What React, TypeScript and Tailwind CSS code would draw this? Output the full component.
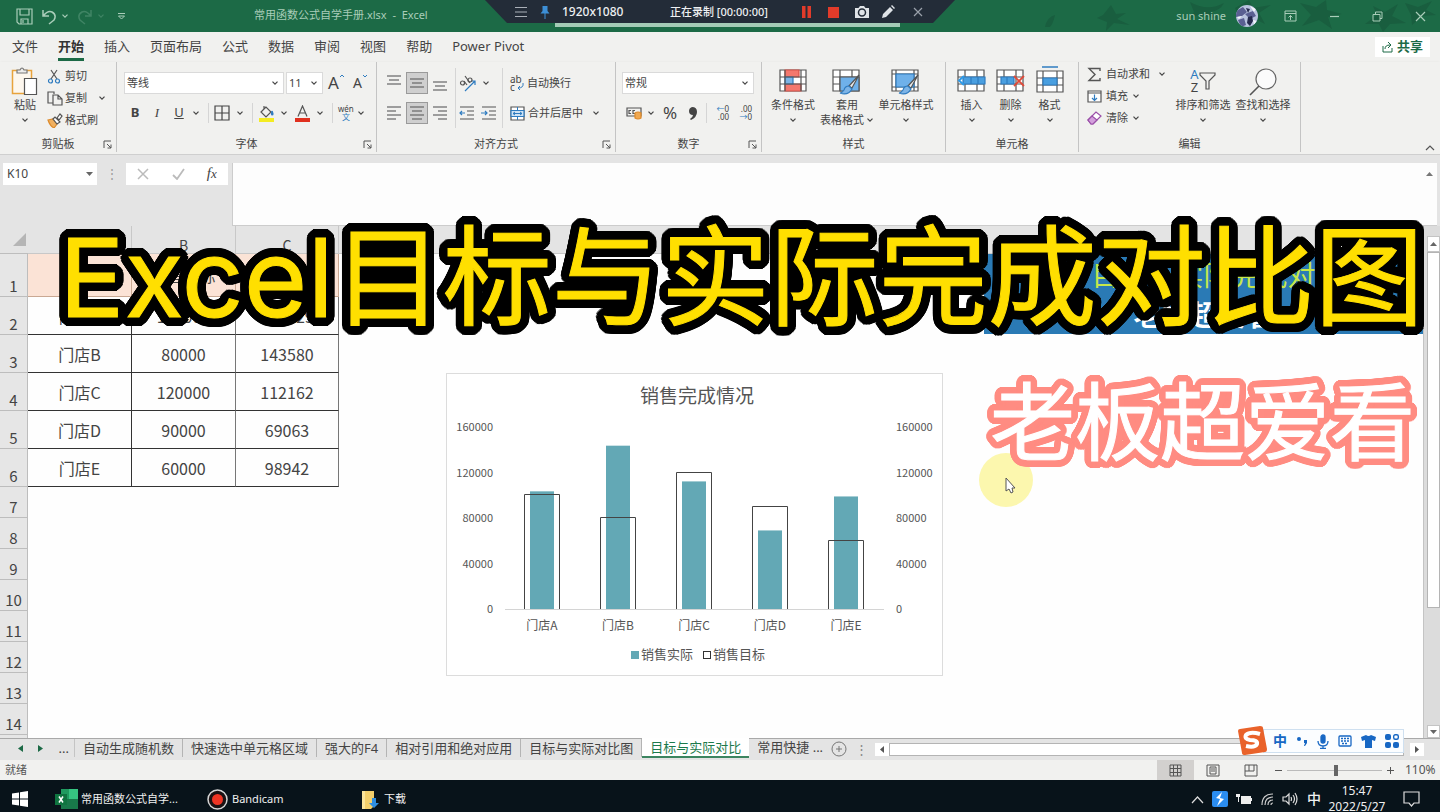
import type { ReactNode } from "react";

const stores = [
  { name: "门店A", target: 100000, actual: 103429 },
  { name: "门店B", target: 80000, actual: 143580 },
  { name: "门店C", target: 120000, actual: 112162 },
  { name: "门店D", target: 90000, actual: 69063 },
  { name: "门店E", target: 60000, actual: 98942 },
];

const menuTabs = ["文件", "开始", "插入", "页面布局", "公式", "数据", "审阅", "视图", "帮助", "Power Pivot"];

const sheetTabs = ["自动生成随机数", "快速选中单元格区域", "强大的F4", "相对引用和绝对应用", "目标与实际对比图", "目标与实际对比"];

// Rounded outline: copies of the glyphs set round in a circle
function outline(radius: number, color: string) {
  const steps = 40;
  return Array.from({ length: steps }, (_, i) => {
    const a = (i / steps) * Math.PI * 2;
    return `${(Math.cos(a) * radius).toFixed(1)}px ${(Math.sin(a) * radius).toFixed(1)}px 0 ${color}`;
  }).join(",");
}

function Chevron({ className = "" }: { className?: string }) {
  return (
    <svg viewBox="0 0 8 8" className={`h-2 w-2 shrink-0 ${className}`} fill="none" stroke="currentColor" strokeWidth="1.2">
      <path d="M1.5 2.7 4 5.2l2.5-2.5" />
    </svg>
  );
}

function Svg({ w, h, children }: { w: number; h: number; children: ReactNode }) {
  return (
    <svg width={w} height={h} viewBox={`0 0 ${w} ${h}`} fill="none" stroke="#555" strokeWidth="1.2" className="shrink-0">
      {children}
    </svg>
  );
}

function Group({ title, className, launcher, children }: { title: string; className: string; launcher?: boolean; children: ReactNode }) {
  return (
    <section className={`flex shrink-0 flex-col border-r border-[#c4c4c4] ${className}`}>
      <div className="h-[74px]">{children}</div>
      <div className="flex h-4 items-center px-1">
        <span className="flex-1 pl-3 text-center leading-4">{title}</span>
        <span className="flex w-3 justify-end">
          {launcher && (
            <button aria-label={`${title}设置`}>
              <Svg w={9} h={9}>
                <path d="M1 8V1h7M4 4l4 4M8 4.500V8H4.500" strokeWidth="1" />
              </Svg>
            </button>
          )}
        </span>
      </div>
    </section>
  );
}

function BigButton({ label, children, className }: { label: string; children: ReactNode; className: string }) {
  return (
    <button className={`flex flex-col items-center ${className}`}>
      <span className="flex h-8 items-center">{children}</span>
      <span className="whitespace-nowrap leading-4">{label}</span>
      <Chevron className="mt-[3px]" />
    </button>
  );
}

function Lines({ align, y = 0 }: { align: "l" | "c" | "r"; y?: number }) {
  const short = { l: [1, 9], c: [3, 10], r: [6, 9] }[align];
  const rows = y ? [y, y + 4, y + 8] : [2, 6, 10, 14];
  return (
    <Svg w={16} h={16}>
      {rows.map((r, i) => (
        <path key={r} d={i % 2 ? `M${short[0]} ${r}h${short[1]}` : `M1 ${r}h14`} stroke="#666" />
      ))}
    </Svg>
  );
}

function IconButton({ label, active, children }: { label: string; active?: boolean; children: ReactNode }) {
  return (
    <button
      aria-label={label}
      className={`flex h-[22px] w-[22px] items-center justify-center border ${active ? "border-[#9a9a9a] bg-[#cfcfcf]" : "border-transparent"}`}
    >
      {children}
    </button>
  );
}

function Combo({ label, value, className }: { label: string; value: string; className: string }) {
  return (
    <div className={`flex h-[22px] items-center border border-[#dadada] bg-white pr-1 ${className}`}>
      <select aria-label={label} className="min-w-0 flex-1 appearance-none bg-transparent pl-[2px] outline-none">
        <option>{value}</option>
      </select>
      <Chevron />
    </div>
  );
}

function TitleBar() {
  return (
    <header className="relative flex h-8 shrink-0 items-center overflow-hidden bg-[#1c6a46] text-[#a9cdb9]">
      <svg className="absolute right-0 top-0 h-8 w-[440px]" viewBox="0 0 440 32" fill="#195e3f">
        <path d="M45 27q2-10 10-12-2 9-5 12zM103 15l8-10 5 9 10-1-9 6 13 6-16-2-8 8 1-9-10-4zM190 2q18 10 34 1-4 8-14 9l10 7-22-4-10 5 6-8zM235 8l14-8 4 8 18-3-12 8 6 11-14-7-10 4z" />
        <path d="M300 3l16 4 10-7 1 10 15 4-14 3 4 12-13-9-17 6 9-11zM365 24l12-9-4-9 12 6 13-8-6 12 14 7-16 1-7 8-4-8zM405 3l13 4 14-6-6 9 10 5-14 1-10 9-1-10z" />
      </svg>
      <div className="flex w-[254px] shrink-0 items-center gap-2 pl-4">
        <button aria-label="保存">
          <Svg w={17} h={17}>
            <path d="M1 1h15v15H3l-2-2zM4 1v6h9V1M5 16v-5h7v5M7 12v3" stroke="#a9cdb9" />
          </Svg>
        </button>
        <button aria-label="撤消" className="flex items-center gap-1">
          <Svg w={16} h={17}>
            <path d="M2 2v6h6M2 8q5-6 9-4 5 3 2 8l-5 4" stroke="#a9cdb9" strokeWidth="1.500" />
          </Svg>
          <Chevron />
        </button>
        <button aria-label="恢复" className="flex items-center gap-1 text-[#3f8464]">
          <Svg w={16} h={17}>
            <path d="M14 2v6H8M14 8Q9 2 5 4q-5 3-2 8l5 4" stroke="#3f8464" strokeWidth="1.500" />
          </Svg>
          <Chevron />
        </button>
        <button aria-label="自定义快速访问工具栏" className="pl-1">
          <Svg w={9} h={9}>
            <path d="M1 1.500h7M1.500 4h6l-3 3z" stroke="#a9cdb9" strokeWidth="1" />
          </Svg>
        </button>
      </div>
      <h1 className="whitespace-pre pb-[2px] text-[11px]">常用函数公式自学手册.xlsx  -  Excel</h1>
      <div className="z-10 ml-auto flex items-center">
        <span className="text-[11px]">sun shine</span>
        <svg className="ml-[10px] h-[22px] w-[22px] rounded-full" viewBox="0 0 22 22">
          <rect width="22" height="22" fill="#b9c3df" />
          <path d="M0 6l7-4 4 5-5 4-6 1zM9 9l8-3 3 5-6 3zM2 15l6-2 2 7-5 2z" fill="#5a5f92" />
          <path d="M12 12l4-1 1 5-3 5-3-3zM10 3l4 1-2 4z" fill="#262a4e" />
          <path d="M14 1l6 3-2 3zM1 12l5-1-3 3zM17 15l4 1-3 4z" fill="#f2f4fb" />
        </svg>
        <div className="flex w-[182px] items-center justify-between pl-[26px] pr-[14px]">
          <button aria-label="功能区显示选项">
            <Svg w={13} h={12}>
              <path d="M1 1h11v10H1zM1 3.500h11M6.500 10V5.500M4.500 7.500l2-2 2 2" stroke="#a9cdb9" strokeWidth="1" />
            </Svg>
          </button>
          <button aria-label="最小化">
            <Svg w={11} h={11}>
              <path d="M1 5.500h9" stroke="#a9cdb9" />
            </Svg>
          </button>
          <button aria-label="还原">
            <Svg w={11} h={11}>
              <path d="M1 3.500h7V10H1zM3.500 3.500V1H10v6.500H8" stroke="#a9cdb9" strokeWidth="1" />
            </Svg>
          </button>
          <button aria-label="关闭">
            <Svg w={11} h={11}>
              <path d="M1 1l9 9M10 1l-9 9" stroke="#a9cdb9" />
            </Svg>
          </button>
        </div>
      </div>
    </header>
  );
}

// Screen recorder toolbar, docked on top of the title bar
function RecorderBar() {
  return (
    <div className="absolute left-[485px] top-0 z-20 w-[470px]">
      <svg className="absolute inset-0 h-7 w-full" viewBox="0 0 470 28" preserveAspectRatio="none">
        <path d="M0 0h470l-22 23H22z" fill="#232c38" />
        <path d="M70 23h345v4H70z" fill="#a4cbb6" />
      </svg>
      <div className="relative flex h-6 items-center text-[12px] font-medium text-[#eef0f2]">
        <button aria-label="菜单" className="ml-[30px]">
          <Svg w={12} h={12}>
            <path d="M0 1.500h12M0 6h12M0 10.500h12" stroke="#aab0b8" />
          </Svg>
        </button>
        <button aria-label="置顶" className="ml-[13px]">
          <Svg w={10} h={14}>
            <path d="M2.500 1h5v5l2 2.500H.5l2-2.500zM4.500 8h1v6h-1z" fill="#3d8fd6" stroke="none" />
          </Svg>
        </button>
        <span className="ml-[12px] w-[108px]">1920x1080</span>
        <span className="w-[132px] whitespace-nowrap text-[11px]">正在录制 [00:00:00]</span>
        <button aria-label="暂停">
          <Svg w={9} h={12}>
            <path d="M0 0h3.500v12H0zM5.500 0H9v12H5.500z" fill="#e23b2a" stroke="none" />
          </Svg>
        </button>
        <button aria-label="停止" className="ml-[17px] h-[11px] w-[11px] bg-[#e23b2a]" />
        <button aria-label="截图" className="ml-[15px]">
          <Svg w={16} h={14}>
            <path d="M1 3h3.500l1.500-2h4l1.500 2H15v10H1z" fill="#dfe3e7" stroke="none" />
            <circle cx="8" cy="7.500" r="3.500" stroke="#232c38" strokeWidth="1.500" />
          </Svg>
        </button>
        <button aria-label="绘制" className="ml-[11px]">
          <Svg w={14} h={14}>
            <path d="M1 13l1-4 7-7 3 3-7 7zM10 1l1-1 3 3-1 1z" fill="#dfe3e7" stroke="none" />
          </Svg>
        </button>
        <button aria-label="关闭录制" className="ml-[18px]">
          <Svg w={10} h={10}>
            <path d="M1 1l8 8M9 1L1 9" stroke="#9aa1aa" />
          </Svg>
        </button>
      </div>
    </div>
  );
}

function MenuTabs() {
  return (
    <nav className="flex h-[30px] shrink-0 items-center bg-[#f1f1ef] pl-3 pr-[10px] text-[13px] text-[#444]">
      <div className="flex gap-5">
        {menuTabs.map((tab) => (
          <button
            key={tab}
            className={tab === "开始" ? "border-b-[3px] border-[#1c6a46] font-bold text-[#333] leading-6" : "border-b-[3px] border-transparent leading-6"}
          >
            {tab}
          </button>
        ))}
      </div>
      <button className="ml-auto flex h-5 items-center gap-1 bg-white px-[7px] text-[13px] font-bold text-[#1c6a46]">
        <Svg w={11} h={12}>
          <path d="M1 5v6h9V7M3 8q0-4 5-4M6 1l3 3-3 3" stroke="#1c6a46" strokeWidth="1" />
        </Svg>
        共享
      </button>
    </nav>
  );
}

const gridPath = "M1 2h26v21H1zM1 9h26M1 16h26M8 2v21M20 2v21";

function Brush() {
  return (
    <>
      <path d="M27 7L17 18l3 2z" fill="#eee" />
      <path d="M17 18q-4 0-5 4-2 3-4 3 8 3 12-4z" fill="#7db4e6" stroke="#2f7cc0" />
    </>
  );
}

function Ribbon() {
  return (
    <div className="flex h-[93px] shrink-0 overflow-hidden border-b border-[#cfcfcf] bg-[#f1f1ef] pb-[2px] text-[11px] text-[#444] shadow">
      <Group title="剪贴板" className="w-[117px]" launcher>
        <div className="flex pt-[3px]">
          <BigButton label="粘贴" className="ml-2 w-[34px]">
            <Svg w={28} h={30}>
              <path d="M1.500 4.500h19v23h-19z" fill="#fdf7ee" stroke="#e8a33c" strokeWidth="1.500" />
              <path d="M6 7V4h3q2-4 4 0h3v3z" fill="#eee" stroke="#777" />
              <path d="M13.500 12.500h12v16h-12z" fill="#fff" />
            </Svg>
          </BigButton>
          <div className="ml-[5px] flex flex-col">
            <button className="flex h-[22px] items-center gap-1">
              <Svg w={14} h={15}>
                <path d="M4 1l6 9M10 1L4 10" />
                <circle cx="3.500" cy="12" r="2" stroke="#2f7cc0" />
                <circle cx="10.500" cy="12" r="2" stroke="#2f7cc0" />
              </Svg>
              剪切
            </button>
            <button className="flex h-[22px] items-center gap-[2px]">
              <Svg w={16} h={15}>
                <path d="M6 12H1V1h6v2M6 4h5l4 4v6H6zM11 4v4h4" />
              </Svg>
              复制
              <Chevron className="ml-[9px]" />
            </button>
            <button className="flex h-[22px] items-center gap-[2px]">
              <Svg w={16} h={15}>
                <path d="M1 7l5-1 4 5-3 4q-4-2-6-8z" fill="#f0b060" stroke="#dd8a2a" />
                <path d="M6 6l2-2 5 5-3 2zM10 5l3-4 2 2-3 4z" fill="#fff" />
              </Svg>
              格式刷
            </button>
          </div>
        </div>
      </Group>

      <Group title="字体" className="w-[260px]" launcher>
        <div className="flex flex-col pl-[7px] pt-[6px]">
          <div className="flex h-[30px] items-center">
            <Combo label="字体" value="等线" className="w-[160px]" />
            <Combo label="字号" value="11" className="ml-[2px] w-[37px]" />
            <button aria-label="增大字号" className="ml-[5px] flex items-start text-[17px] leading-5">
              A<svg width="6" height="6" viewBox="0 0 6 6"><path d="M1 4l2-2 2 2" fill="none" stroke="#2f7cc0" /></svg>
            </button>
            <button aria-label="减小字号" className="ml-2 flex items-start text-[14px] leading-5">
              A<svg width="6" height="6" viewBox="0 0 6 6"><path d="M1 2l2 2 2-2" fill="none" stroke="#2f7cc0" /></svg>
            </button>
          </div>
          <div className="flex h-[30px] items-center text-[13px]">
            <button className="w-[22px] font-bold">B</button>
            <button className="w-[22px] font-['Liberation_Serif',serif] italic">I</button>
            <button className="w-[22px] underline">U</button>
            <Chevron className="ml-[2px]" />
            <span className="ml-2 h-5 w-px bg-[#d5d5d5]" />
            <button aria-label="边框" className="ml-[5px] flex items-center gap-[6px]">
              <Svg w={16} h={16}>
                <path d="M1 1h14v14H1zM8 1v14M1 8h14" stroke="#444" />
              </Svg>
              <Chevron />
            </button>
            <span className="ml-2 h-5 w-px bg-[#d5d5d5]" />
            <button aria-label="填充颜色" className="ml-[5px] flex items-center gap-[5px]">
              <Svg w={17} h={17}>
                <path d="M8 2L3 7l5 5 5-5zM6 4V1" />
                <path d="M14 6q2 4 0 4-1-1 0-4" fill="#2f7cc0" stroke="#2f7cc0" />
                <path d="M1 13h15v4H1z" fill="#f4ec22" stroke="none" />
              </Svg>
              <Chevron />
            </button>
            <button aria-label="字体颜色" className="ml-[6px] flex items-center gap-[5px]">
              <Svg w={17} h={17}>
                <path d="M4 11.500L8.500 1 13 11.500M5.500 8h6" />
                <path d="M1 13h15v4H1z" fill="#e0301e" stroke="none" />
              </Svg>
              <Chevron />
            </button>
            <span className="ml-2 h-5 w-px bg-[#d5d5d5]" />
            <button aria-label="拼音" className="ml-[5px] flex items-center gap-[3px]">
              <span className="flex flex-col items-center text-[8px] leading-[8px]">
                wén<span className="text-[#2f7cc0]">文</span>
              </span>
              <Chevron />
            </button>
          </div>
        </div>
      </Group>

      <Group title="对齐方式" className="w-[239px]" launcher>
        <div className="flex pl-[6px] pt-[6px]">
          <div className="w-[72px]">
            <div className="flex h-[30px] items-center gap-px">
              <IconButton label="顶端对齐"><Lines align="c" y={1} /></IconButton>
              <IconButton label="垂直居中" active><Lines align="c" y={4} /></IconButton>
              <IconButton label="底端对齐"><Lines align="c" y={7} /></IconButton>
            </div>
            <div className="flex h-[30px] items-center gap-px">
              <IconButton label="左对齐"><Lines align="l" /></IconButton>
              <IconButton label="居中" active><Lines align="c" /></IconButton>
              <IconButton label="右对齐"><Lines align="r" /></IconButton>
            </div>
          </div>
          <div className="w-[48px] border-x border-[#d5d5d5] pl-[3px]">
            <div className="flex h-[30px] items-center">
              <button aria-label="方向" className="flex items-center gap-[5px]">
                <Svg w={18} h={17}>
                  <path d="M6 16L16 6M16 10V6h-4" stroke="#2f7cc0" />
                  <circle cx="3.500" cy="8" r="2" />
                  <path d="M5 6l3 4M6 1l5 7" />
                  <circle cx="11" cy="5" r="2" />
                </Svg>
                <Chevron />
              </button>
            </div>
            <div className="flex h-[30px] items-center gap-[7px]">
              <button aria-label="减少缩进">
                <Svg w={15} h={14}>
                  <path d="M1 1h14M8 5h7M8 9h7M1 13h14" />
                  <path d="M6 7H1M3 5L1 7l2 2" stroke="#2f7cc0" />
                </Svg>
              </button>
              <button aria-label="增加缩进">
                <Svg w={15} h={14}>
                  <path d="M1 1h14M8 5h7M8 9h7M1 13h14" />
                  <path d="M0 7h6M4 5l2 2-2 2" stroke="#2f7cc0" />
                </Svg>
              </button>
            </div>
          </div>
          <div className="pl-[7px]">
            <button className="flex h-[30px] items-center gap-[3px]">
              <span className="relative w-[14px] text-left text-[10px] leading-[8px]">
                ab
                <br />c
                <svg className="absolute bottom-0 right-0" width="8" height="8" viewBox="0 0 8 8" fill="none" stroke="#2f7cc0">
                  <path d="M7 0q1 5-5 5M4 3L2 5l2 2" />
                </svg>
              </span>
              自动换行
            </button>
            <button className="flex h-[30px] items-center gap-[3px]">
              <Svg w={15} h={15}>
                <path d="M1 1h13v13H1z" fill="#fff" />
                <path d="M1 4.500h13v6H1z" fill="#cfe3f5" stroke="#2f7cc0" />
                <path d="M3 7.500h9M5 6L3 7.500 5 9M10 6l2 1.500L10 9M7.500 1v3M7.500 11v3" stroke="#2f7cc0" strokeWidth="1" />
              </Svg>
              合并后居中
              <Chevron className="ml-[6px]" />
            </button>
          </div>
        </div>
      </Group>

      <Group title="数字" className="w-[146px]" launcher>
        <div className="pl-[6px] pt-[6px]">
          <div className="flex h-[30px] items-center">
            <Combo label="数字格式" value="常规" className="w-[132px]" />
          </div>
          <div className="flex h-[30px] items-center pl-1">
            <button aria-label="会计数字格式" className="flex items-center gap-[5px]">
              <Svg w={16} h={14}>
                <path d="M1 2h14v8H1zM5 4.500H3v3h2M9 4.500H7v3h2" />
                <path d="M9 7q3-2 6 0v5q-3 2-6 0z" fill="#f0a850" stroke="#dd8a2a" />
              </Svg>
              <Chevron />
            </button>
            <button className="ml-[8px] text-[17px]">%</button>
            <button aria-label="千位分隔样式" className="ml-[11px]">
              <Svg w={9} h={13}>
                <path d="M4 0q5 0 5 5 0 5-6 8L2 12q3-2 3-4Q1 8 1 4q0-3 3-4z" fill="#444" stroke="none" />
              </Svg>
            </button>
            <span className="ml-[9px] h-5 w-px bg-[#d5d5d5]" />
            <button aria-label="增加小数位数" className="ml-[5px] w-[17px] text-right text-[8px] leading-[8px]">
              <span className="text-[#2f7cc0]">←</span>0
              <br />.00
            </button>
            <button aria-label="减少小数位数" className="ml-[6px] w-[17px] text-right text-[8px] leading-[8px]">
              .00
              <br />
              <span className="text-[#2f7cc0]">→</span>0
            </button>
          </div>
        </div>
      </Group>

      <Group title="样式" className="w-[184px]">
        <div className="flex pl-[5px] pt-[3px]">
          <BigButton label="条件格式" className="w-[52px]">
            <Svg w={28} h={26}>
              <path d="M1 2h26v21H1z" fill="#fff" />
              <path d="M6 2h14v7H6zM6 16h16v7H6z" fill="#f4786e" stroke="#d8534a" />
              <path d="M6 9h8v7H6z" fill="#7db4e6" stroke="#2f7cc0" />
              <path d="M6 2v21M22 2v21M1 9h26M1 16h26" />
            </Svg>
          </BigButton>
          <button className="flex w-[56px] flex-col items-center">
            <span className="flex h-8 items-center">
              <Svg w={30} h={27}>
                <path d={gridPath} fill="#fff" />
                <path d="M8 9h19v14H8z" fill="#6fb1ea" />
                <Brush />
              </Svg>
            </span>
            <span className="leading-4">套用</span>
            <span className="flex items-center gap-[2px] whitespace-nowrap leading-[14px]">
              表格格式
              <Chevron />
            </span>
          </button>
          <BigButton label="单元格样式" className="w-[62px]">
            <Svg w={30} h={27}>
              <path d="M1 2h26v21H1zM1 6h26M1 19h26M5 2v21M23 2v21" fill="#fff" />
              <path d="M5 6h18v13H5z" fill="#6fb1ea" stroke="#2f7cc0" />
              <Brush />
            </Svg>
          </BigButton>
        </div>
      </Group>

      <Group title="单元格" className="w-[133px]">
        <div className="flex pl-[6px] pt-[3px]">
          <BigButton label="插入" className="w-[39px]">
            <Svg w={30} h={26}>
              <path d={gridPath} fill="#fff" />
              <path d="M6 9h22v7H6zM14 9v7M21 9v7" fill="#4a9fe0" stroke="#2f7cc0" />
              <path d="M7 8l-5 4.500L7 17" stroke="#2f9be8" strokeWidth="2" />
            </Svg>
          </BigButton>
          <BigButton label="删除" className="w-[39px]">
            <Svg w={30} h={26}>
              <path d={gridPath} fill="#fff" />
              <path d="M5 9h13v7H5zM11 9v7" fill="#4a9fe0" stroke="#2f7cc0" />
              <path d="M18 8l10 10M28 8L18 18" stroke="#e04a3a" strokeWidth="1.800" />
            </Svg>
          </BigButton>
          <BigButton label="格式" className="w-[39px]">
            <Svg w={28} h={30}>
              <path d="M6 1h16" stroke="#2f7cc0" strokeWidth="1.500" />
              <path d="M1 5h26v21H1zM1 12h26M1 19h26M7 5v21M21 5v21" fill="#fff" />
              <path d="M7 12h14v7H7z" fill="#4a9fe0" stroke="#2f7cc0" />
            </Svg>
          </BigButton>
        </div>
      </Group>

      <Group title="编辑" className="w-[222px]">
        <div className="flex pl-[8px] pt-[1px]">
          <div className="w-[86px]">
            <button className="flex h-[22px] items-center gap-1">
              <Svg w={15} h={15}>
                <path d="M13 4V1.500H2l6 6-6 6h11V11" strokeWidth="1.400" />
              </Svg>
              自动求和
              <Chevron className="ml-1" />
            </button>
            <button className="flex h-[22px] items-center gap-1">
              <Svg w={15} h={13}>
                <path d="M1 1h13v11H1zM1 3h13" fill="#fff" />
                <path d="M7.500 4.500v6M5 8l2.500 2.500L10 8" stroke="#2f7cc0" />
              </Svg>
              填充
              <Chevron />
            </button>
            <button className="flex h-[22px] items-center gap-1">
              <Svg w={15} h={14}>
                <path d="M1 9l8-8 5 4-8 8H4z" fill="#fff" stroke="#9a4fa8" />
                <path d="M1 9l4-4 5 4-4 4H4z" fill="#d3a0dc" stroke="#9a4fa8" />
              </Svg>
              清除
              <Chevron />
            </button>
          </div>
          <BigButton label="排序和筛选" className="w-[60px] pt-[2px]">
            <span className="flex items-center">
              <span className="flex flex-col text-[13px] leading-[13px]">
                <span className="text-[#2f7cc0]">A</span>
                <span>Z</span>
              </span>
              <Svg w={17} h={18}>
                <path d="M1 1h15v2l-6 6v8H7V9L1 3z" />
              </Svg>
            </span>
          </BigButton>
          <BigButton label="查找和选择" className="w-[60px] pt-[2px]">
            <Svg w={28} h={29}>
              <circle cx="17" cy="12" r="10" fill="#fbfbfb" stroke="#666" />
              <path d="M10 19l-9 9" strokeWidth="1.600" />
            </Svg>
          </BigButton>
        </div>
      </Group>
      <div className="flex flex-1 items-end justify-end pr-[5px]">
        <button aria-label="折叠功能区">
          <Svg w={10} h={8}>
            <path d="M1 6l4-4 4 4" />
          </Svg>
        </button>
      </div>
    </div>
  );
}

function FormulaBar() {
  return (
    <div className="flex h-[71px] shrink-0 items-start bg-[#e4e4e4] pl-[3px] pr-[3px] pt-2 text-xs text-[#444]">
      <div className="flex h-[22px] w-[94px] shrink-0 items-center bg-white pr-1">
        <input aria-label="名称框" defaultValue="K10" className="w-0 flex-1 bg-transparent pl-1 outline-none" />
        <svg width="7" height="4" viewBox="0 0 7 4" fill="#666"><path d="M0 0h7L3.500 4z" /></svg>
      </div>
      <span className="flex h-[22px] w-[29px] shrink-0 items-center justify-center text-[#999]">⋮</span>
      <div className="mr-1 flex h-[22px] w-[102px] shrink-0 items-center justify-around bg-white">
        <button aria-label="取消">
          <Svg w={12} h={12}><path d="M1 1l10 10M11 1L1 11" stroke="#bbb" strokeWidth="1.500" /></Svg>
        </button>
        <button aria-label="输入">
          <Svg w={13} h={12}><path d="M1 7l4 4 7-10" stroke="#bbb" strokeWidth="1.800" /></Svg>
        </button>
        <button aria-label="插入函数" className="font-['Liberation_Serif',serif] text-[15px] italic">
          f<span className="text-[13px]">x</span>
        </button>
      </div>
      <div className="flex h-full flex-1 border-b border-l border-[#ccc] bg-[#fdfdfd]">
        <textarea aria-label="编辑栏" className="flex-1 resize-none bg-transparent outline-none" />
        <button aria-label="上一行" className="flex h-[22px] w-4 items-center justify-center">
          <svg width="7" height="4" viewBox="0 0 7 4" fill="#777"><path d="M0 4h7L3.500 0z" /></svg>
        </button>
      </div>
    </div>
  );
}

const rowHead = "border-b border-r border-[#bdbdbd] bg-[#e6e6e6] p-0 align-bottom text-[15px] font-normal leading-5 text-[#444]";

function Grid() {
  return (
    <table className="w-full table-fixed border-separate border-spacing-0 font-['Noto_Sans_CJK_SC',sans-serif] text-[#444]">
      <colgroup>
        <col className="w-[28px]" />
        <col className="w-[104px]" />
        <col className="w-[104px]" />
        <col className="w-[103px]" />
        <col />
      </colgroup>
      <thead>
        <tr className="h-7 bg-[#e4e4e4] text-sm">
          <th className="border-b border-[#bdbdbd] p-0">
            <svg width="13" height="13" viewBox="0 0 13 13" fill="#b5b5b5" className="mb-[1px] ml-auto mr-[2px] mt-auto">
              <path d="M13 0v13H0z" />
            </svg>
          </th>
          {["A", "B", "C", ""].map((c) => (
            <th key={c} className="border-b border-r border-[#c8c8c8] p-0 pt-[10px] font-normal leading-4">
              {c}
            </th>
          ))}
        </tr>
      </thead>
      <tbody className="text-center text-base">
        <tr className="h-[43px]">
          <th className={rowHead}>1</th>
          {["门店", "销售目标", "销售实际"].map((h) => (
            <td key={h} className="border-b border-r border-[#c9a893] bg-[#fbe3d6] p-0">{h}</td>
          ))}
          <td />
        </tr>
        {stores.map((s, i) => (
          <tr key={s.name} className="h-[38px]">
            <th className={rowHead}>{i + 2}</th>
            <td className="border-b border-r border-[#333] p-0">{s.name}</td>
            <td className="border-b border-r border-[#333] border-r-[#777] p-0">{s.target}</td>
            <td className="border-b border-r border-[#333] border-r-[#777] p-0">{s.actual}</td>
            <td />
          </tr>
        ))}
        {[7, 8, 9, 10, 11, 12, 13, 14].map((n) => (
          <tr key={n} className="h-[31px]">
            <th className={rowHead}>{n}</th>
            <td colSpan={4} />
          </tr>
        ))}
        <tr className="h-[31px]">
          <th className={rowHead} />
          <td colSpan={4} />
        </tr>
      </tbody>
    </table>
  );
}

function SalesChart() {
  const base = 236;
  const scale = (v: number) => (v / 160000) * 182;
  const ticks = [0, 40000, 80000, 120000, 160000];
  return (
    <svg width="497" height="303" viewBox="0 0 497 303" className="font-['Noto_Sans_CJK_SC',sans-serif]" fill="#555">
      <rect x="0.500" y="0.500" width="496" height="302" fill="#fff" stroke="#dcdcdc" />
      <text x="251" y="30" textAnchor="middle" fontSize="19">销售完成情况</text>
      {ticks.map((t) => (
        <g key={t} fontSize="11">
          <text x="47" y={base - scale(t) + 4} textAnchor="end">{t}</text>
          <text x="450" y={base - scale(t) + 4}>{t}</text>
        </g>
      ))}
      <path d="M59 236.500h379" stroke="#d4d4d4" />
      {stores.map((s, i) => {
        const cx = 96 + i * 76;
        return (
          <g key={s.name}>
            <rect x={cx - 12} y={base - scale(s.actual)} width="24" height={scale(s.actual)} fill="#63a8b5" />
            <path
              d={`M${cx - 17.5} ${base}V${Math.round(base - scale(s.target)) - 0.5}h35V${base}`}
              fill="none"
              stroke="#444"
            />
            <text x={cx} y="257" textAnchor="middle" fontSize="12">{s.name}</text>
          </g>
        );
      })}
      <rect x="185" y="278" width="8" height="8" fill="#63a8b5" />
      <text x="195" y="286" fontSize="13">销售实际</text>
      <rect x="257.500" y="278.500" width="7" height="7" fill="#fff" stroke="#333" />
      <text x="267" y="286" fontSize="13">销售目标</text>
    </svg>
  );
}

function Workbook() {
  return (
    <main className="flex min-h-0 flex-1 bg-[#e4e4e4]">
      <div className="relative min-w-0 flex-1 overflow-hidden bg-[#fefefe]">
        <Grid />
        <div className="absolute left-[446px] top-[147px]">
          <SalesChart />
        </div>
        <div className="absolute left-[984px] right-0 top-[28px] bg-[#2a7ab5] text-center font-['Noto_Sans_CJK_SC',sans-serif] text-[28px] leading-[40px]">
          <p className="text-[#c6e84a]">目标与实际完成对</p>
          <p className="font-bold text-white">老板超爱看</p>
        </div>
        <svg className="absolute left-[978px] top-[226px]" width="56" height="56" viewBox="0 0 56 56">
          <circle cx="28" cy="28" r="27" fill="#fcf7ae" />
          <path d="M28 26v13l3-2 2 4 2-1-1-4h3z" fill="#fff" stroke="#555" />
        </svg>
      </div>
      <div className="flex w-[17px] shrink-0 flex-col border-l border-[#c4c4c4] bg-[#dcdcdc] pl-[3px] pt-[10px]">
        <button aria-label="向上滚动" className="flex h-4 items-center justify-center border border-[#c4c4c4] bg-white">
          <svg width="7" height="4" viewBox="0 0 7 4" fill="#666"><path d="M0 4h7L3.500 0z" /></svg>
        </button>
        <div className="flex-[355] border border-[#b4b4b4] bg-white" />
        <div className="flex-[118]" />
        <button aria-label="向下滚动" className="flex h-[13px] items-center justify-center border border-[#c4c4c4] bg-white">
          <svg width="7" height="4" viewBox="0 0 7 4" fill="#666"><path d="M0 0h7L3.500 4z" /></svg>
        </button>
      </div>
    </main>
  );
}

function SheetTabs() {
  return (
    <div className="flex h-[22px] shrink-0 items-start border-t border-[#a9a9a9] bg-[#e4e4e4] text-[13px] text-[#444]">
      <div className="flex h-[18px] w-[75px] shrink-0 items-center justify-between border-r border-[#c4c4c4] pl-[18px] pr-[5px]">
        <button aria-label="上一个工作表"><svg width="5" height="7" viewBox="0 0 5 7" fill="#1c6a46"><path d="M5 0v7L0 3.500z" /></svg></button>
        <button aria-label="下一个工作表"><svg width="5" height="7" viewBox="0 0 5 7" fill="#1c6a46"><path d="M0 0v7l5-3.500z" /></svg></button>
        <button className="leading-[18px]">...</button>
      </div>
      {sheetTabs.map((tab) => (
        <button
          key={tab}
          className={
            tab === "目标与实际对比"
              ? "-mt-px h-5 shrink-0 border-b-2 border-[#3c8560] bg-white px-2 leading-[18px] text-[#1c7a4c]"
              : "h-[18px] shrink-0 border-r border-[#b4b4b4] px-2 leading-4"
          }
        >
          {tab}
        </button>
      ))}
      <button className="shrink-0 whitespace-pre pl-2 leading-4">常用快捷 ...</button>
      <button aria-label="新工作表" className="ml-2 mt-[2px]">
        <Svg w={16} h={16}>
          <circle cx="8" cy="8" r="7" stroke="#777" strokeWidth="1" />
          <path d="M8 5v6M5 8h6" stroke="#777" strokeWidth="1" />
        </Svg>
      </button>
      <span className="w-7 shrink-0 text-center leading-5 text-[#888]">⋮</span>
      <div className="mt-1 flex h-[13px] flex-1 pr-4">
        <button aria-label="向左滚动" className="flex w-[14px] items-center justify-center bg-white">
          <svg width="4" height="7" viewBox="0 0 4 7" fill="#555"><path d="M4 0v7L0 3.500z" /></svg>
        </button>
        <div className="mr-[6px] flex-1 border border-[#b4b4b4] bg-white" />
        <button aria-label="向右滚动" className="flex w-[14px] items-center justify-center bg-white">
          <svg width="4" height="7" viewBox="0 0 4 7" fill="#555"><path d="M0 0v7l4-3.500z" /></svg>
        </button>
      </div>
    </div>
  );
}

function StatusBar() {
  return (
    <div className="flex h-5 shrink-0 items-center bg-[#f1f1ef] pl-[5px] pr-[5px] text-[11px] text-[#555]">
      <span className="flex-1">就绪</span>
      <button aria-label="普通视图" className="flex h-5 w-[37px] items-center justify-center bg-[#d2d0ce]">
        <Svg w={13} h={13}><path d="M1 1h11v11H1zM1 4.500h11M1 8.500h11M4.500 1v11M8.500 1v11" strokeWidth="1" /></Svg>
      </button>
      <button aria-label="页面布局视图" className="flex h-5 w-[38px] items-center justify-center">
        <Svg w={14} h={13}><path d="M1 1h12v11H1zM4 3h6v7H4zM5 5h4M5 7h4" strokeWidth="1" /></Svg>
      </button>
      <button aria-label="分页预览" className="flex h-5 w-[37px] items-center justify-center">
        <Svg w={14} h={13}><path d="M1 1h12v11H1zM1 7h9V1M5 1v6" strokeWidth="1" /></Svg>
      </button>
      <button aria-label="缩小" className="ml-[5px]">
        <Svg w={9} h={9}><path d="M1 4.500h7" strokeWidth="1" /></Svg>
      </button>
      <input
        type="range"
        aria-label="缩放"
        defaultValue={52}
        className="mx-1 h-3 w-[95px] appearance-none bg-[linear-gradient(#bbb,#bbb)] bg-[length:100%_1px] bg-center bg-no-repeat [&::-webkit-slider-thumb]:h-[11px] [&::-webkit-slider-thumb]:w-1 [&::-webkit-slider-thumb]:appearance-none [&::-webkit-slider-thumb]:bg-[#666]"
      />
      <button aria-label="放大">
        <Svg w={9} h={9}><path d="M1 4.500h7M4.500 1v7" strokeWidth="1" /></Svg>
      </button>
      <span className="ml-[10px] w-[30px] whitespace-nowrap text-xs">110%</span>
    </div>
  );
}

function Taskbar() {
  return (
    <footer className="flex h-8 shrink-0 overflow-hidden bg-[#08131a] text-xs text-[#f0f0f0]">
      <button aria-label="开始" className="flex w-[55px] items-center pl-[12px] pt-[6px]">
        <svg width="16" height="16" viewBox="0 0 16 16" fill="#fff">
          <path d="M0 2.500L7 1.500v6H0zM8 1.300L16 0v7.500H8zM0 8.500h7v6l-7-1zM8 8.500h8V16l-8-1.300z" />
        </svg>
      </button>
      <button className="flex w-[152px] items-center gap-[3px] whitespace-nowrap pt-[6px] text-[11px]">
        <svg width="23" height="20" viewBox="0 0 23 20">
          <path d="M6 0h17v20H6z" fill="#1f9a5f" />
          <path d="M14 0h9v10h-9z" fill="#36c481" />
          <path d="M6 10h17v10H6z" fill="#18784a" />
          <path d="M0 5h12v11H0z" fill="#0f7440" />
          <path d="M4 7.500l4 6M8 7.500l-4 6" stroke="#fff" strokeWidth="1.500" />
        </svg>
        常用函数公式自学...
      </button>
      <button className="flex w-[153px] items-center gap-1 pt-[6px]">
        <svg width="21" height="21" viewBox="0 0 21 21">
          <circle cx="10.500" cy="10.500" r="9.500" fill="#1a1214" stroke="#d5d5d5" strokeWidth="1.500" />
          <circle cx="10.500" cy="10.500" r="5.500" fill="#ee3524" />
        </svg>
        <span className="text-[11px]">Bandicam</span>
      </button>
      <button className="flex items-center gap-[5px] pt-[6px] text-[11px]">
        <svg width="19" height="19" viewBox="0 0 19 19">
          <path d="M2 1h12v15l-3 3H2z" fill="#f3cf6b" />
          <path d="M2 1h3v18H2z" fill="#fbe49a" />
          <path d="M12 8h4v5h3l-5 5-5-5h3z" fill="#2f8ee0" />
        </svg>
        下载
      </button>
      <div className="ml-auto flex items-center gap-2 pt-[6px]">
        <Svg w={13} h={9}><path d="M1 8l5.500-6L12 8" stroke="#ddd" /></Svg>
        <svg width="16" height="16" viewBox="0 0 16 16">
          <rect width="16" height="16" rx="2" fill="#2b8df0" />
          <path d="M10 1L4 7l4 1-3 7 7-7-4-1z" fill="#fff" />
        </svg>
        <svg width="16" height="12" viewBox="0 0 16 12" fill="#eee">
          <path d="M5 3h10v2h1v3h-1v3H5zM0 1h4v3H3v5H2V4H0z" />
        </svg>
        <Svg w={14} h={14}>
          <path d="M2 13Q2 2 13 2M5 13q0-8 8-8M8 13q0-5 5-5M11 13q0-2 2-2" stroke="#ccc" />
        </Svg>
        <Svg w={17} h={14}>
          <path d="M1 5h3l3-3v10L4 9H1zM9 5q1 2 0 4M11 3q3 4 0 8M13 1q4 6 0 12" stroke="#ddd" />
        </Svg>
        <span className="text-sm font-medium leading-4">中</span>
      </div>
      <time className="ml-[6px] w-[60px] pt-[3px] text-center leading-4">
        15:47
        <br />
        2022/5/27
      </time>
      <button aria-label="通知" className="ml-[16px] mr-5 pt-[6px]">
        <Svg w={17} h={16}><path d="M1 1h15v11h-5l-2.500 3L6 12H1z" stroke="#ddd" /></Svg>
      </button>
    </footer>
  );
}

// Floating input-method bar
function ImeBar() {
  return (
    <div className="absolute bottom-[57px] right-[36px] z-20 flex h-[28px] items-center">
      <svg width="30" height="30" viewBox="0 0 30 30" className="z-10 -mr-1 shrink-0">
        <path d="M1 5q0-2 2-2l20-3q3 0 3 2l4 21q0 3-2 3L8 29q-3 0-3-2z" fill="#e9622a" />
        <path d="M23 8Q13 5 9 9q-2 4 4 5 8 0 7 4-2 4-11 2" fill="none" stroke="#fff" strokeWidth="4" />
      </svg>
      <div className="flex h-6 w-[141px] items-center justify-between border border-[#cfe0f0] bg-[#fbfdff] pl-[9px] pr-1">
        <span className="text-sm font-bold leading-5 text-[#1767c4]">中</span>
        <svg width="12" height="12" viewBox="0 0 12 12" fill="#1767c4">
          <circle cx="3" cy="4" r="2" />
          <path d="M8 5h3v3l-2 3H8l1-3H8z" />
        </svg>
        <svg width="12" height="15" viewBox="0 0 12 15" fill="none" stroke="#1767c4" strokeWidth="1.300">
          <rect x="4" y="1" width="4" height="8" rx="2" fill="#1767c4" />
          <path d="M1 7q0 5 5 5t5-5M6 12v2M3 14.300h6" />
        </svg>
        <svg width="14" height="12" viewBox="0 0 14 12" fill="none" stroke="#1767c4" strokeWidth="1.300">
          <rect x="1" y="1" width="12" height="10" rx="1" />
          <path d="M3 3.500h8M3 6h8M4 8.500h6" strokeDasharray="2 1" />
        </svg>
        <svg width="15" height="13" viewBox="0 0 15 13" fill="#1767c4">
          <path d="M5 0q2.500 2 5 0l5 2-1 4-3-1v8H4V5L1 6 0 2z" />
        </svg>
        <svg width="14" height="14" viewBox="0 0 14 14" fill="#1767c4">
          <rect width="6" height="6" rx="2" />
          <rect y="8" width="6" height="6" rx="2" />
          <rect x="8" y="8" width="6" height="6" rx="2" />
          <rect x="8.700" y=".7" width="4.600" height="4.600" rx="1.500" fill="none" stroke="#1767c4" strokeWidth="1.400" />
        </svg>
      </div>
    </div>
  );
}

export default function App() {
  return (
    <div lang="zh-CN" className="relative flex h-screen flex-col overflow-hidden font-['Noto_Sans','Noto_Sans_CJK_SC',sans-serif]">
      <TitleBar />
      <RecorderBar />
      <MenuTabs />
      <Ribbon />
      <FormulaBar />
      <Workbook />
      <SheetTabs />
      <StatusBar />
      <Taskbar />
      <ImeBar />
      <p
        className="absolute left-[59px] top-[197px] z-30 whitespace-nowrap font-['Inter','Noto_Sans_CJK_SC',sans-serif] text-[109px] leading-[160px] text-[#ffdf00] [-webkit-text-stroke:1px_#ffdf00]"
        style={{ textShadow: outline(9, "#000") }}
      >
        Excel目标与实际完成对比图
      </p>
      <p
        className="absolute left-[990px] top-[357px] z-30 whitespace-nowrap font-['Noto_Sans_CJK_SC',sans-serif] text-[85px] leading-[120px] text-white [-webkit-text-stroke:1px_#fff]"
        style={{ textShadow: outline(7, "#ff8c82") }}
      >
        老板超爱看
      </p>
    </div>
  );
}
